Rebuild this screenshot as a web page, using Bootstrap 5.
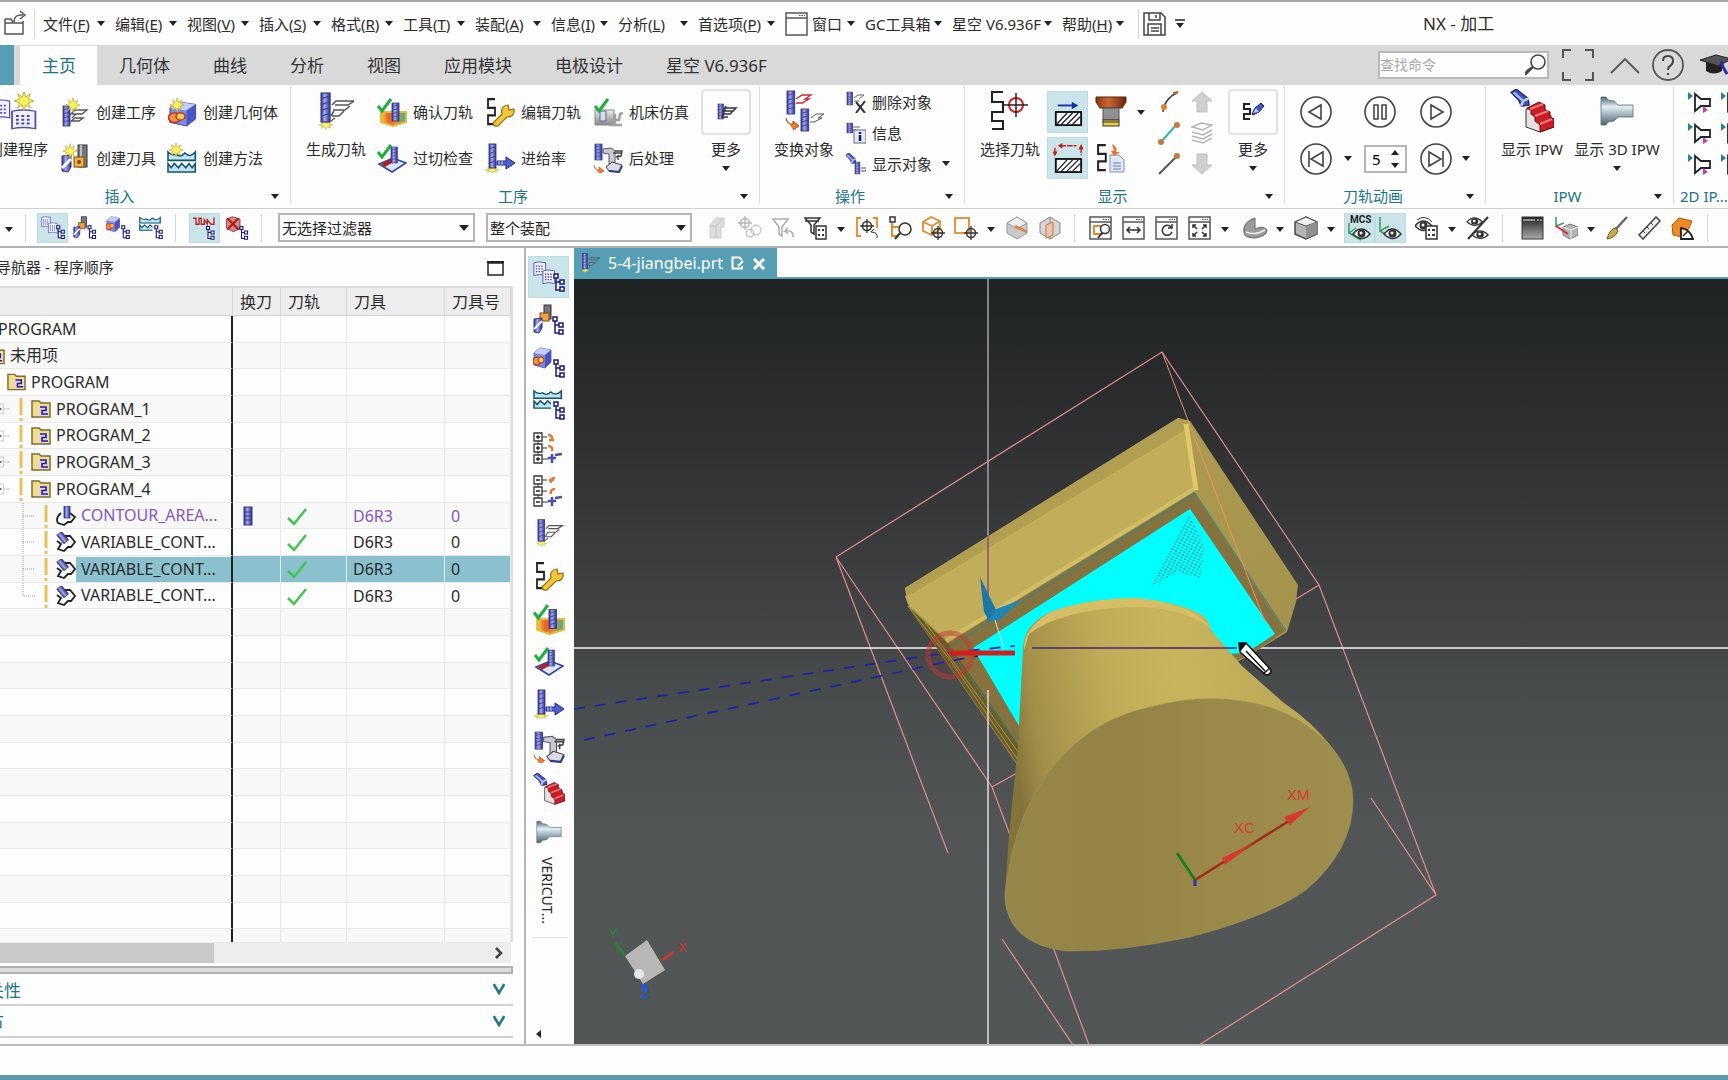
<!DOCTYPE html>
<html lang="zh-CN">
<head>
<meta charset="utf-8">
<meta name="viewport" content="width=device-width, initial-scale=1">
<title>NX - 加工</title>
<link href="https://cdn.jsdelivr.net/npm/bootstrap@5.3.0/dist/css/bootstrap.min.css" rel="stylesheet">
<style>
:root{--teal:#569eb4;--ink:#2b2b2b;--title:#217386;--on:#cbe4e9}
body{font-family:"Noto Sans","Noto Sans CJK SC",sans-serif;font-size:15px;line-height:20px;color:var(--ink);background:#fdfdfd;overflow:hidden}
button{background:none;border:0;padding:0;color:inherit;white-space:nowrap}
svg{flex:none;overflow:visible}
.car{display:inline-block;border:4px solid transparent;border-top:5px solid #222;border-bottom:0;flex:none}
.car-up{border-top:0;border-bottom:5px solid #222}
.vline{width:1px;background:#d5d5d5;flex:none}
/* menu bar */
.menubar{height:45px;border-top:2px solid #a5a5a5;white-space:nowrap}
.menubar .vline{height:30px}
.menubar .mi{padding-right:10px}
.m67{width:67px}.m72{width:72px}.m76{width:76px}.m80{width:80px}.m87{width:87px}.m110{width:110px}
.apptitle{font-size:17px;margin-left:238px}
/* ribbon tabs */
.tabbar{height:40px;background:#d9d9d9}
.filetab{width:14px;background:var(--teal);margin-right:6px}
.rtab{font-size:17px;padding:2px 21px 0 22px;color:#333;text-decoration:none;line-height:38px}
.rtab.on{background:#fdfdfd;color:var(--title);margin-top:1px;padding-top:1px}
.find{width:171px;height:28px;border:2px solid #b9b9b9;background:#fdfdfd;margin:6px 13px 0 auto}
.find input{border:0;outline:0;width:120px;background:none;font-size:14px;padding:0}
.find input::placeholder{color:#aaa}
/* ribbon */
.ribbon{height:124px;border-bottom:1px solid #cfcfcf;padding-top:1px}
.grp{flex:none;border-right:1px solid #dcdcdc;height:118px}
.gbody{display:grid;height:100px;column-gap:12px;align-content:start}
.gtitle{color:var(--title);height:20px;padding-right:11px}
.gtitle span:first-child{flex:1;text-align:center;padding-right:5px}
.big{display:flex;flex-direction:column;align-items:center;padding-top:4px;height:98px}
.big .pic{height:42px;display:flex;align-items:center;margin-bottom:7px}
.big .pic.box{width:50px;height:46px;margin:-1px 0 4px;border:2px solid #e2e2e2;border-radius:4px;justify-content:center}
.big .car{margin-top:7px}
.two{padding-top:3px}
.two>*{height:46px;display:flex;align-items:center;gap:6px}
.three>*{height:31px;display:flex;align-items:center;gap:6px}
.tog{background:var(--on);border:1px solid #bfdbe2;display:flex;align-items:center;justify-content:center}
.g1{width:311px;margin-left:-20px}.g1 .gbody{grid-template-columns:60px 95px 110px;padding-left:8px}
.g1 .gtitle span:first-child{padding-right:12px}
.g2{width:469px}.g2 .gbody{grid-template-columns:58px 96px 96px 96px 50px;padding-left:16px}
.g3{width:205px}.g3 .gbody{grid-template-columns:60px 106px;padding-left:14px}
.g4{width:320px}.g4 .gbody{grid-template-columns:60px 41px 55px 27px 30px 50px;column-gap:7px;padding-left:15px}
.g4 .togs{display:flex;flex-direction:column;gap:4px;padding-top:5px}
.g4 .tog{height:42px}
.g5{width:201px}.g5 .gbody{grid-template-columns:32px 32px 56px 32px 28px;grid-template-rows:47px 47px;column-gap:0;padding:2px 0 0 15px;align-items:center}
.g5 .car{justify-self:center}
.spin{width:43px;height:28px;border:2px solid #b5b5b5;padding:0 6px}
.spin input{width:14px;border:0;padding:0;background:none;outline:0;font-size:15px;appearance:textfield}
.spin input::-webkit-inner-spin-button{display:none}
.g6{width:188px}.g6 .gbody{grid-template-columns:62px 84px;padding-left:15px}
.g7{border:0;width:54px;overflow:hidden}.g7 .gbody{grid-template-columns:24px 24px;column-gap:9px;padding-left:14px}
.g7 .gtitle{padding-left:6px;white-space:nowrap}
/* selection toolbar */
.toolbar{height:39px;border-bottom:2px solid #b2b2b2}
.toolbar .tb{width:33px;height:30px;display:flex;align-items:center;justify-content:center;flex:none}
.toolbar .tb.tog{width:31px}
.toolbar .cr{width:18px;text-align:center;line-height:5px;flex:none}
.toolbar .vline{height:28px;margin:0 9px 0 8px}
.toolbar .left-end{margin:0 7px}
.pick{position:relative;height:29px;flex:none}
.pick select{width:100%;height:29px;border:2px solid #b5b5b5;border-radius:0;padding:0 2px;appearance:none;background:#fdfdfd;color:#222;font-size:15px;line-height:20px}
.pick .car{position:absolute;right:6px;top:12px;border-width:5px;border-top-width:6px;border-bottom:0}
.pick-a{width:197px;margin:0 11px 0 7px}.pick-b{width:206px;margin-right:8px}
/* navigator */
.workarea{height:796px}
.nav-pane{width:526px;border-right:2px solid #b4b4b4;flex:none}
.nav-head{height:38px;font-size:15px;padding:0 20px 0 0}
.nav-head .shift{margin-left:-4px}
.gridbox{width:513px;height:656px;border-right:2px solid #dedede;overflow:hidden}
.gridbox table{table-layout:fixed;width:511px;border-collapse:separate;border-spacing:0;font-size:16px;line-height:20px}
.gridbox th{height:30px;background:#ededed;font-weight:400;border-right:1px solid #d4d4d4;border-top:2px solid #dcdcdc;border-bottom:1px solid #d4d4d4;padding:0 0 0 7px}
.gridbox td{height:27px;border-right:1px solid #e8e8e8;border-bottom:1px solid #e9e9e9;padding:0 0 0 6px;white-space:nowrap;overflow:hidden}
.gridbox tbody tr:nth-child(3n+2) td{height:26px}
.gridbox tbody tr:nth-child(even) td{background:#f8f8f8}
.gridbox td:first-child{border-right:2px solid #222;padding:0}
.gridbox .c-a{width:233px}.gridbox .c-b{width:48px}.gridbox .c-c{width:66px}.gridbox .c-d{width:98px}
.gridbox .cell{display:flex;align-items:center;height:25px}
.gridbox .cell .shift{margin-left:-2px}
.gridbox .lbl{padding-left:5px;flex:1;line-height:25px}
.gridbox .purple td{color:#8557b8}
.gridbox tbody tr.sel td:not(:first-child),.gridbox .sel .lbl{background:#8bc0ce}
.gridbox tr.sel td{border-right-color:#dcebee}
.gridbox tr.sel td:first-child{border-right-color:#222}
.lv1{margin-left:-14px}.lv2{padding-left:7px}
.hbar{height:21px;width:511px;background:#ededed}
.hbar .thumb{width:214px;height:20px;background:#c9c9c9}
.split{height:8px;width:513px;background:#dcdcdc;border:2px solid #b0b0b0;border-left:0;margin-top:3px}
.fold{height:32px;width:513px;border-bottom:2px solid #cfcfcf;color:var(--title);font-size:17px;padding-right:7px}
.fold span{margin-left:-13px;padding-top:4px}
/* vertical icon strip */
.strip{width:48px;flex:none;padding-top:8px}
.strip button{width:41px;height:43px;margin-left:2px;display:flex;align-items:center;justify-content:center}
.strip button:nth-child(3n+1){height:42px}
.strip .vert{writing-mode:vertical-rl;align-self:flex-start;height:76px;line-height:20px;margin:4px 0 4px 11px;font-size:14px}
.strip hr{margin:0 6px;border-color:#999}
.lefty{border:4px solid transparent;border-right:5px solid #222;border-left:0;margin:auto auto 6px 10px;width:5px}
/* graphics window */
.stage{min-width:0}
.doctabs{height:31px;border-bottom:2px solid var(--teal)}
.doctab{background:var(--teal);color:#fff;width:203px;height:31px;font-size:16px;padding:0 7px 2px}
.view{min-height:0;background:linear-gradient(#202323,#2f3132 22%,#404243 43%,#4a4d4e 56%,#515556 72%,#525657)}
.view>svg{display:block;overflow:hidden}
.status{height:36px;border-top:2px solid #bdbdbd;border-bottom:5px solid #5b98ab}
</style>
</head>
<body class="d-flex flex-column vh-100">

<svg width="0" height="0" class="position-absolute" aria-hidden="true">
<defs>
<linearGradient id="bl"><stop offset="0" stop-color="#2b2f86"/><stop offset=".4" stop-color="#a5abee"/><stop offset="1" stop-color="#2c2f90"/></linearGradient>
<linearGradient id="gr" x2="0" y2="1"><stop offset="0" stop-color="#eee"/><stop offset="1" stop-color="#888"/></linearGradient>
<linearGradient id="pipe" x2="0" y2="1"><stop offset="0" stop-color="#4a6573"/><stop offset=".35" stop-color="#e4f0f5"/><stop offset="1" stop-color="#48626e"/></linearGradient>
<linearGradient id="brn"><stop offset="0" stop-color="#8a3510"/><stop offset=".4" stop-color="#c96a35"/><stop offset="1" stop-color="#6e2707"/></linearGradient>
<linearGradient id="rb"><stop offset="0" stop-color="#f2d63c"/><stop offset=".3" stop-color="#e8602b"/><stop offset=".6" stop-color="#f08b2c"/><stop offset="1" stop-color="#27b7a0"/></linearGradient>
<linearGradient id="dk" x2="0" y2="1"><stop offset="0" stop-color="#222"/><stop offset="1" stop-color="#aaa"/></linearGradient>
<polygon id="star" points="0,-9 1.5,-3.5 6,-6.5 3.7,-1.8 9,0 3.7,1.8 6,6.5 1.5,3.5 0,9 -1.5,3.5 -6,6.5 -3.7,1.8 -9,0 -3.7,-1.8 -6,-6.5 -1.5,-3.5" fill="#fdf35a" stroke="#b5a93a" stroke-width=".8"/>
<g id="mill"><rect width="7" height="20" fill="url(#bl)" stroke="#33367e" stroke-width=".8"/><path d="M0 4l7-2M0 8l7-2M0 12l7-2M0 16l7-2" stroke="#3a3e9a" stroke-width=".8"/></g>
<path id="feather2" d="M0 5L5 0h12L12 4H2M2 8L6 4M0 12L5 8h8l-4 3H1" fill="none" stroke="#555" stroke-width="1.300"/>
<path id="tree" d="M1 1h4v4h-4zM3 5v12h4M3 9h4M7 7h4v4h-4zM7 14h4v4h-4z" fill="#fff" stroke="#1a1a78" stroke-width="1.500"/>
<path id="tick" d="M0 6l4 5L13-1" fill="none" stroke="#1fae3d" stroke-width="3"/>
<path id="snake" d="M8 0H1v7h7v6H1v7h7" fill="none" stroke="#222" stroke-width="1.800"/>
<g id="sheet"><path d="M0 1q6-2 13 0v14q-7-2-13 0z" fill="#f1f1fd" stroke="#5353a4"/><path d="M3 4v9M6 4v9M9 4v9" stroke="#4a4aa0" stroke-width="1.600" stroke-dasharray="1.500 1.500"/></g>
<g id="bcube"><path d="M0 5l6-5 11 2v12l-6 6-11-3z" fill="#7d89e6" stroke="#4450a0" stroke-width=".8"/><path d="M0 5l6-5 11 2-6 5z" fill="#c3cefb"/><path d="M11 7l6-5v12l-6 6z" fill="#4a55c4"/><circle cx="3" cy="13" r="4" fill="#f49443" stroke="#c02b10"/><circle cx="7" cy="12" r="3" fill="#f4cd54" stroke="#c02b10"/></g>
<g id="wave"><path d="M0 0v8h26V0q-5 6-10 1-4 5-8 1-4 2-8-2z" fill="#bfe6f3" stroke="#15536e" stroke-width="1.500"/><path d="M0 19v-8l3 4 3-4 4 4 3-4 4 4 3-4 3 4 3-4v8z" fill="#bfe6f3" stroke="#15536e" stroke-width="1.500"/></g>
<g id="torch"><path d="M0 3l4-3 9 8 1 6-6 1-2-5z" fill="#3e55c8" stroke="#1b2158"/><path d="M2 3l7 7" stroke="#aab9f7" stroke-width="2"/><path d="M8 15q0-5 6-7" stroke="#c9cfe8" stroke-width="2" fill="none"/></g>
<g id="eye"><path d="M0 6q8-10 17 0-8 9-17 0z" fill="#fff" stroke="#333" stroke-width="1.500"/><circle cx="8.500" cy="5.500" r="4" fill="#333"/><circle cx="8" cy="5" r="1.500" fill="#fff"/></g>
<g id="win"><path d="M1 1h21v22H1zM1 6h21" fill="none" stroke="#555" stroke-width="1.500"/><path d="M14 3.500h6" stroke="#444" stroke-dasharray="1.500 1"/></g>
<g id="aim"><circle r="4.500" fill="none" stroke="#333" stroke-width="1.500"/><path d="M-7 0h14M0-7v14" stroke="#333" stroke-width="1.300"/></g>

<symbol id="i-prog" viewBox="0 0 38 38"><use href="#sheet" transform="translate(-5 8) scale(1.2)"/><use href="#sheet" transform="translate(13 18) scale(1.8 1.250)"/><use href="#star" transform="translate(25 9) scale(1.100)"/></symbol>
<symbol id="i-op" viewBox="0 0 30 30"><use href="#mill" x="3" y="9"/><use href="#feather2" x="10" y="13"/><use href="#star" transform="translate(13 8) scale(.8)"/></symbol>
<symbol id="i-toolmk" viewBox="0 0 30 30"><rect x="18" y="2" width="9" height="22" fill="#777" stroke="#334"/><path d="M21 2v21" stroke="#bbb" stroke-width="2"/><rect x="14" y="14" width="10" height="10" fill="#f0b045" stroke="#7c4b08"/><circle cx="19" cy="19" r="2" fill="#7c4b08"/><path d="M2 13l9-1v12l-3 5-6-1z" fill="url(#bl)" stroke="#33367e"/><path d="M2 25l9-9" stroke="#fff" stroke-width="3"/><use href="#star" transform="translate(10 8) scale(.8)"/></symbol>
<symbol id="i-geo" viewBox="0 0 30 30"><use href="#bcube" transform="translate(3 5) scale(1.500 1.200)"/><use href="#star" transform="translate(10 8) scale(.8)"/></symbol>
<symbol id="i-method" viewBox="0 0 30 30"><use href="#wave" transform="translate(1 9) scale(1.050 1.050)"/><use href="#star" transform="translate(9 7) scale(.8)"/></symbol>
<symbol id="i-gen" viewBox="0 0 36 38"><use href="#star" transform="translate(8 33) scale(.8 .5)"/><use href="#mill" transform="translate(3 1) scale(1.300 1.450)"/><path d="M14 13L18 9h18l-6 4H17M15 18h12l5-4M13 24l3-5M14 24h7l5-5M13 29l4-3" fill="none" stroke="#555" stroke-width="1.500"/></symbol>
<symbol id="i-verify" viewBox="0 0 30 30"><path d="M4 15h25v10l-13 4-12-4z" fill="url(#rb)" stroke="#e0bd39" stroke-width="2"/><use href="#mill" transform="translate(15 6) scale(1 .9)"/><use href="#tick" x="1" y="3"/></symbol>
<symbol id="i-edit" viewBox="0 0 30 30"><use href="#snake" transform="translate(2 2) scale(1 1.250)"/><path d="M8 26l9-9q-2-8 6-9l1 5 5-1q1 8-7 8l-9 9q-4 1-5-3z" fill="#f2c63c" stroke="#94700f" stroke-width="1.200"/></symbol>
<symbol id="i-gouge" viewBox="0 0 30 30"><path d="M2 21l14-6 13 5-14 9z" fill="#dfe6fb" stroke="#2b47a0" stroke-width="1.500"/><path d="M4 21l10-5 4 2-10 6z" fill="#b51f1f"/><use href="#mill" transform="translate(14 4) scale(.9 .8)"/><use href="#tick" x="1" y="3"/></symbol>
<symbol id="i-feed" viewBox="0 0 30 30"><use href="#star" transform="translate(7 27) scale(.8 .35)"/><use href="#mill" transform="translate(4 1) scale(1 1.200)"/><path d="M12 18h9v-4l9 6-9 6v-4h-9z" fill="#4e5fd0" stroke="#1f2775"/><path d="M14 18v4M17 18v4" stroke="#c6cdf7"/></symbol>
<symbol id="i-sim" viewBox="0 0 30 30"><path d="M2 13h19v15H2z" fill="url(#gr)" stroke="#888"/><path d="M7 14h6v10H7z" fill="#d6dcf5" stroke="#667"/><path d="M18 23h8l1-6 3-1M17 28h12M22 17v10" fill="none" stroke="#a0a0a0" stroke-width="2.500"/><use href="#tick" x="2" y="3"/></symbol>
<symbol id="i-post" viewBox="0 0 30 30"><use href="#mill" transform="translate(2 1) scale(1 .8)"/><path d="M10 6l8-1 4 3v15h-6V11l-6-1z" fill="#c7cbd6" stroke="#555"/><path d="M22 8h7l-1 5-5 1M25 12v5M20 10h9" fill="none" stroke="#444" stroke-width="1.500"/><path d="M13 24l6-5 10 3-3 7-10-1z" fill="#d9dce6" stroke="#444"/><path d="M16 28l10 1 3-6" fill="none" stroke="#333b80" stroke-width="2"/><path d="M1 22q0 5 5 5v-3l5 4-5 3" fill="#ee7f2d" stroke="#a54a0c" stroke-width=".6"/></symbol>
<symbol id="i-more" viewBox="0 0 24 20"><use href="#mill" transform="translate(4 2) scale(.8 .75)"/><path d="M10 6h12l-3 3H8M8 12h8l3-3M10 15h4M12 4L8 16" fill="none" stroke="#333" stroke-width="1.500"/></symbol>
<symbol id="i-xform" viewBox="0 0 40 42"><use href="#mill" transform="translate(3 1) scale(1.100 1.150)"/><path d="M12 9l6-4h9l-6 4h4l-7 4h-6" fill="none" stroke="#c72c2c" stroke-width="1.300"/><use href="#mill" transform="translate(17 19) scale(1.100 1.100)"/><path d="M27 28l5-4h8l-6 4h4l-8 4h-4" fill="none" stroke="#555"/><path d="M2 28q1 7 7 6v-3l6 5-6 4" fill="#ee7f2d" stroke="#a54a0c"/></symbol>
<symbol id="i-del" viewBox="0 0 20 22"><use href="#mill" transform="translate(1 1) scale(.8 .65)"/><path d="M8 7l4-3h6l-5 4M8 10h5" fill="none" stroke="#666"/><path d="M10 11l9 11M19 10l-9 12" stroke="#333" stroke-width="2"/></symbol>
<symbol id="i-inf" viewBox="0 0 20 22"><use href="#mill" transform="translate(1 1) scale(.8 .5)"/><path d="M7 5h7M7 8h4" stroke="#666"/><rect x="8" y="8" width="12" height="13" fill="#e4eafa" stroke="#667"/><path d="M14 10v2M14 13v6" stroke="#14205e" stroke-width="2.500"/></symbol>
<symbol id="i-shw" viewBox="0 0 20 22"><use href="#torch" transform="scale(.7)"/><use href="#mill" transform="translate(9 9) scale(.7 .6)"/><path d="M15 15h7l-3 3h-4" fill="none" stroke="#555"/></symbol>
<symbol id="i-selp" viewBox="0 0 40 40"><path d="M13 1H2v10h11v10H2v9h11v8H2" fill="none" stroke="#222" stroke-width="2"/><circle cx="26" cy="14" r="7" fill="none" stroke="#cc2222" stroke-width="2"/><path d="M14 14h24M26 2v24" stroke="#222" stroke-width="1.500"/></symbol>
<symbol id="i-hatch1" viewBox="0 0 32 34"><path d="M5 10h18" stroke="#1631a8" stroke-width="2"/><path d="M20 6l7 4-7 4z" fill="#1631a8"/><rect x="3" y="17" width="27" height="14" fill="#fff" stroke="#111" stroke-width="2"/><path d="M4 30l11-12M9 30l12-12M15 30l12-12M21 30l8-8" stroke="#223" stroke-width="1.500"/></symbol>
<symbol id="i-hatch2" viewBox="0 0 32 34"><path d="M8 4h17M2 6v8M30 6v8" stroke="#c02222" stroke-width="1.500" stroke-dasharray="6 1"/><path d="M5 4l5-3v6zM-1 10h6l-3 5zM27 8h6l-3-6z" fill="#c02222"/><rect x="3" y="18" width="27" height="14" fill="#fff" stroke="#111" stroke-width="2"/><path d="M4 31l11-12M9 31l12-12M15 31l12-12M21 31l8-8" stroke="#223" stroke-width="1.500"/></symbol>
<symbol id="i-holder" viewBox="0 0 32 34"><path d="M1 2h30v5l-4 6H5L1 7z" fill="url(#brn)" stroke="#5f2409"/><rect x="8" y="13" width="16" height="12" fill="#8f8f94" stroke="#555"/><rect x="8" y="25" width="16" height="6" fill="#e8cf3b" stroke="#333"/><path d="M8 27h16" stroke="#333"/></symbol>
<symbol id="i-lst" viewBox="0 0 32 32"><use href="#snake" transform="translate(2 3) scale(1.100 1.250)"/><path d="M15 13h9l5 5v12H15z" fill="#dfe7fa" stroke="#8790b0"/><path d="M18 21h8M18 24h8M18 27h8" stroke="#6c7bb0"/><path d="M17 2q6 3 4 8h4l-6 4-3-5h3z" fill="#ec6f2b"/></symbol>
<symbol id="i-c1" viewBox="0 0 24 24"><path d="M6 22Q7 9 21 2" fill="none" stroke="#444" stroke-width="1.500"/><circle cx="7" cy="17" r="3" fill="#d98036"/><path d="M21 2l-5 1" stroke="#e06022" stroke-width="2"/></symbol>
<symbol id="i-c2" viewBox="0 0 24 24"><path d="M4 21L20 3" stroke="#33b5b0" stroke-width="2"/><circle cx="4" cy="21" r="3" fill="#c47b41"/><circle cx="20" cy="4" r="3" fill="#c47b41"/></symbol>
<symbol id="i-c3" viewBox="0 0 24 24"><path d="M2 22L20 4" stroke="#555" stroke-width="2"/><circle cx="20" cy="4" r="3" fill="#c47b41"/></symbol>
<symbol id="i-up" viewBox="0 0 22 22"><path d="M11 1l10 9h-5v11H6V10H1z" fill="#cfcfcf" stroke="#c0c0c0"/></symbol>
<symbol id="i-dn" viewBox="0 0 22 22"><path d="M11 21l10-9h-5V1H6v11H1z" fill="#cfcfcf" stroke="#c0c0c0"/></symbol>
<symbol id="i-lay" viewBox="0 0 22 22"><path d="M1 5l9-4 11 2-9 5zM1 10l11 3 9-5M1 14l11 3 9-5M1 18l11 3 9-5" fill="none" stroke="#b5b5b5" stroke-width="1.500"/></symbol>
<symbol id="i-morep" viewBox="0 0 24 24"><path d="M9 4H3v5h6v5H3v5h6" fill="none" stroke="#222" stroke-width="2"/><path d="M11 14l3-6 6-5 3 3-5 6-6 3z" fill="#3e55c8" stroke="#1b2158"/><path d="M12 13l3-5 3 4z" fill="#b9c4f5"/></symbol>
<symbol id="i-ipw" viewBox="0 0 44 44"><use href="#torch" transform="translate(1 0) scale(1.300 1.150)"/><path d="M16 20v18l14 5 14-5v-6l-4-6-5-6z" fill="#e6e0e0" stroke="#333"/><path d="M17 19l12-6 6 3v5l5 2v5l4 2v8l-14 5v-7l-5-4v-4l-4-3v-4z" fill="#c81f27" stroke="#6e0b10"/><path d="M20 20l13-5M25 27l13-5M30 35l12-5" stroke="#f07880" stroke-width="2"/></symbol>
<symbol id="i-ipw3" viewBox="0 0 34 30"><path d="M1 1h5l2 3 6 1 4 4h15v12H18l-4 4-6 1-2 3H1z" fill="url(#pipe)" stroke="#566f7b" stroke-width=".8"/></symbol>
<symbol id="i-2d" viewBox="0 0 24 22"><path d="M7 3v17l6-5h9V8h-9z" fill="none" stroke="#222" stroke-width="1.800"/><path d="M0 1l5 4-5 4z" fill="#2e78a5"/><path d="M15 15l5 4-5 3z" fill="#c03dbd"/></symbol>

<symbol id="i-nprog" viewBox="0 0 32 32"><use href="#sheet" x="1" y="1" transform="scale(.9)"/><use href="#sheet" x="11" y="10" transform="scale(.9)"/><use href="#tree" x="20" y="12"/></symbol>
<symbol id="i-ntool" viewBox="0 0 32 32"><rect x="11" y="1" width="7" height="14" fill="#777" stroke="#334"/><rect x="7" y="9" width="9" height="8" fill="#f0a045" stroke="#7c4b08"/><path d="M1 15l8-1v10l-3 5-5-1z" fill="url(#bl)" stroke="#33367e"/><path d="M1 25l8-8" stroke="#fff" stroke-width="2"/><use href="#tree" x="19" y="12"/></symbol>
<symbol id="i-ngeo" viewBox="0 0 32 32"><use href="#bcube" x="1" y="1"/><use href="#tree" x="20" y="12"/></symbol>
<symbol id="i-nmeth" viewBox="0 0 32 32"><use href="#wave" transform="translate(1 2) scale(1.050 .9)"/><rect x="18" y="11" width="13" height="20" fill="#fdfdfd"/><use href="#tree" x="20" y="12"/></symbol>
<symbol id="i-exp" viewBox="0 0 32 32"><path d="M5 5v22M9 5h5M9 16h5M9 27h6" stroke="#333"/><path d="M1 1h8v8H1zM1 12h8v8H1zM1 23h8v8H1z" fill="#fff" stroke="#333" stroke-width="1.300"/><path d="M3 5h4M3 16h4M3 27h4M5 3v4M5 14v4M5 25v4" stroke="#222" stroke-width="1.300"/><path d="M15 3q5 0 4 5M15 14q5 0 4 5M16 8l5 0" fill="none" stroke="#e07a35" stroke-width="2.500"/><path d="M19 22v9M15 26h8M22 23l7-1" stroke="#4a4fae" stroke-width="2.500"/></symbol>
<symbol id="i-col" viewBox="0 0 32 32"><path d="M5 5v22M9 5h5M9 16h5M9 27h6" stroke="#333"/><path d="M1 1h8v8H1zM1 12h8v8H1zM1 23h8v8H1z" fill="#fff" stroke="#333" stroke-width="1.300"/><path d="M3 5h4M3 16h4M3 27h4" stroke="#222" stroke-width="1.300"/><path d="M22 3q-5 0-4 5M22 14q-5 0-4 5M16 5h5" fill="none" stroke="#e07a35" stroke-width="2.500"/><path d="M19 22v9M15 26h8M22 23l7-1" stroke="#4a4fae" stroke-width="2.500"/></symbol>
<symbol id="i-redp" viewBox="0 0 32 32"><path d="M0 3h4v8h4V3h3v8h4V5l4 6V5l5 6h4V2" fill="none" stroke="#b52222" stroke-width="1.800"/><use href="#tree" x="17" y="13"/></symbol>
<symbol id="i-redx" viewBox="0 0 32 32"><path d="M2 4l8-3 10 3v13l-9 4-9-5z" fill="#d08a8a" stroke="#8a2020"/><path d="M3 3l15 15M18 3L3 18" stroke="#b01515" stroke-width="2.500"/><use href="#tree" x="19" y="13"/></symbol>
<symbol id="i-fold" viewBox="0 0 20 18"><path d="M1 3V1h7l2 2h9v14H1z" fill="#f2dd8d" stroke="#7b6c2c" stroke-width="1.500"/><path d="M8 6h9v10H8z" fill="#dcd3ef"/><path d="M9 7h6v3.500h-4V14h6" fill="none" stroke="#2b1c8a" stroke-width="1.600"/></symbol>
<symbol id="i-surf" viewBox="0 0 20 20"><path d="M5 7q-6 5-3 10l6 2 4-3h3l4-5-5-4" fill="none" stroke="#222" stroke-width="1.800"/><rect x="8" y="0" width="6" height="12" fill="url(#bl)" stroke="#33367e" stroke-width=".8"/></symbol>
<symbol id="i-surfv" viewBox="0 0 20 20"><path d="M8 4h6l5 6-4 5h-3l-4 4-6-2 3-5-4-3" fill="none" stroke="#222" stroke-width="1.800"/><rect x="4" y="0" width="6" height="11" transform="rotate(-40 7 6)" fill="url(#bl)" stroke="#33367e" stroke-width=".8"/></symbol>
<symbol id="i-chk" viewBox="0 0 20 18"><path d="M1 10l6 6L19 1" fill="none" stroke="#3fc64e" stroke-width="2.500"/></symbol>
<symbol id="i-bang" viewBox="0 0 4 24"><path d="M2 1v17M2 21v3" stroke="#e9c15a" stroke-width="3"/></symbol>
<symbol id="i-plus" viewBox="0 0 16 16"><path d="M-6 3h8v10h-8" fill="none" stroke="#ccc"/><path d="M-2 8h2" stroke="#333" stroke-width="1.500"/><path d="M3 8h6" stroke="#999" stroke-dasharray="1 1"/></symbol>

<symbol id="t-a" viewBox="0 0 24 24"><path d="M5 9l6-7h8v9h-3v11H5z" fill="#ddd" stroke="#ccc"/><path d="M5 10h6l6-7M11 10v12" fill="none" stroke="#c4c4c4"/></symbol>
<symbol id="t-b" viewBox="0 0 24 24"><g opacity=".35"><use href="#aim" x="7" y="7"/><circle cx="12" cy="17" r="4" fill="none" stroke="#333"/><circle cx="18" cy="14" r="5" fill="none" stroke="#333"/></g></symbol>
<symbol id="t-c" viewBox="0 0 24 24"><g opacity=".4" fill="none" stroke="#333" stroke-width="1.500"><path d="M2 3h15l-6 8v9l-3-2v-7zM22 21q1-7-8-6l3-3M14 15l3 3"/></g></symbol>
<symbol id="t-d" viewBox="0 0 24 24"><path d="M1 2h15l-6 7v9l-3-2V9zM1 5h14" fill="none" stroke="#333" stroke-width="1.500"/><path d="M12 10h10v13H12z" fill="#fff" stroke="#333" stroke-width="1.500"/><path d="M14 14h2M18 14h2M14 19h2M18 19h2" stroke="#333" stroke-width="2"/></symbol>
<symbol id="t-e" viewBox="0 0 24 24"><path d="M6 2H2v18h4M18 2h4v10" fill="none" stroke="#e58b2b" stroke-width="1.800"/><use href="#aim" x="12" y="10"/><path d="M22 22q1-6-6-6l3-3" fill="none" stroke="#333"/></symbol>
<symbol id="t-f" viewBox="0 0 24 24"><path d="M4 7v13h7M4 11h8" fill="none" stroke="#e58b2b" stroke-width="2"/><path d="M2 1h5v5H2z" fill="#fff" stroke="#333" stroke-width="1.500"/><circle cx="17" cy="13" r="6" fill="none" stroke="#333" stroke-width="1.500"/><path d="M12 17l-5 6" stroke="#333" stroke-width="2"/></symbol>
<symbol id="t-g" viewBox="0 0 24 24"><path d="M2 6l8-5 9 4v8l-8 6-9-4zM2 6l9 4 8-5M11 10v9" fill="none" stroke="#e08a32" stroke-width="1.800"/><use href="#aim" x="17" y="17"/></symbol>
<symbol id="t-h" viewBox="0 0 24 24"><rect x="1" y="2" width="14" height="15" fill="none" stroke="#e08a32" stroke-width="1.800"/><use href="#aim" x="17" y="17"/></symbol>
<symbol id="t-i" viewBox="0 0 24 24"><path d="M2 7l10-6 10 6v10l-10 6-10-6z" fill="#c9c9c9" stroke="#999"/><path d="M2 7l10 6 10-6-10-6z" fill="#eee" stroke="#999"/><path d="M10 10l12 6" stroke="#e08040" stroke-width="2.500"/></symbol>
<symbol id="t-j" viewBox="0 0 24 24"><path d="M2 7l10-6 10 6v10l-10 6-10-6z" fill="#d5d5d5" stroke="#888"/><path d="M12 1v22" stroke="#888"/><path d="M8 9l7-3v13l-7 3z" fill="#e9c6ad" stroke="#d0763e"/></symbol>
<symbol id="t-k" viewBox="0 0 24 24"><use href="#win"/><path d="M5 10h8v8H5z" fill="none" stroke="#e08a32" stroke-width="2"/><circle cx="16" cy="13" r="4.500" fill="#fff" stroke="#333" stroke-width="1.500"/><path d="M13 17l-4 5" stroke="#333" stroke-width="2"/></symbol>
<symbol id="t-l" viewBox="0 0 24 24"><use href="#win"/><path d="M5 14h13M8 11l-3 3 3 3M15 11l3 3-3 3" fill="none" stroke="#333" stroke-width="1.500"/></symbol>
<symbol id="t-m" viewBox="0 0 24 24"><use href="#win"/><path d="M16 11a5 5 0 1 0 1 5M17 8v4h-4" fill="none" stroke="#333" stroke-width="1.500"/></symbol>
<symbol id="t-n" viewBox="0 0 24 24"><use href="#win"/><path d="M5 12V9h3M15 9h3v3M18 17v3h-3M8 20H5v-3M5 9l4 4M18 9l-4 4M18 20l-4-4M5 20l4-4" fill="none" stroke="#333" stroke-width="1.500"/></symbol>
<symbol id="t-o" viewBox="0 0 26 24"><path d="M2 17q-2-11 11-15v11q8-4 12 1 0 6-12 8-10 0-11-5z" fill="#9b9b9b" stroke="#666"/><path d="M4 16q9 4 19-2" fill="none" stroke="#eee" stroke-width="1.500"/></symbol>
<symbol id="t-p" viewBox="0 0 24 24"><path d="M1 6l11-5 11 5v12l-11 5-11-5z" fill="#b4b4b4" stroke="#333" stroke-width="1.300"/><path d="M1 6l11 4 11-4-11-5z" fill="#eee" stroke="#555"/><path d="M12 10v13l11-5V6z" fill="#909090"/></symbol>
<symbol id="t-q" viewBox="0 0 28 28"><text x="4" y="9" font-size="10" font-weight="700" font-family="Roboto" fill="#222">MCS</text><path d="M3 9v10l12 7M3 19l7-5" fill="none" stroke="#32a060" stroke-width="1.500"/><use href="#eye" x="7" y="14"/></symbol>
<symbol id="t-r" viewBox="0 0 28 28"><path d="M3 3v14l9-5M3 17l12 7" fill="none" stroke="#32a060" stroke-width="1.500"/><use href="#eye" x="7" y="14"/></symbol>
<symbol id="t-s" viewBox="0 0 24 24"><use href="#eye" x="0" y="4"/><path d="M2 4q8-6 15 2" stroke="#333" fill="none"/><path d="M11 10h11v13H11z" fill="#fff" stroke="#333" stroke-width="1.500"/><path d="M13 14h2M17 14h3M13 19h2M17 19h3" stroke="#333" stroke-width="2"/></symbol>
<symbol id="t-t" viewBox="0 0 24 24"><use href="#eye" transform="translate(1 1) scale(.9 .8)"/><use href="#eye" transform="translate(6 14) scale(.95 .8)"/><path d="M22 1L2 23" stroke="#333" stroke-width="2"/></symbol>
<symbol id="t-u" viewBox="0 0 24 24"><rect x="1" y="1" width="21" height="22" fill="url(#dk)" stroke="#333"/><path d="M2 4h19" stroke="#eee" stroke-dasharray="12 2 2 1"/></symbol>
<symbol id="t-v" viewBox="0 0 24 24"><path d="M9 11l7-3 8 3v8l-8 4-7-4z" fill="#b5b5b5" stroke="#777"/><path d="M9 11l8 3 7-3M17 14v9" fill="none" stroke="#eee"/><path d="M2 1v9l8-3" fill="none" stroke="#32a060" stroke-width="1.500"/><path d="M2 10l12 8" stroke="#d22" stroke-width="1.800"/></symbol>
<symbol id="t-w" viewBox="0 0 24 24"><path d="M22 1L10 14" stroke="#666" stroke-width="2.500"/><path d="M11 12q-6 0-9 11 8-1 11-8z" fill="#c5ac4a" stroke="#6b5a1c"/></symbol>
<symbol id="t-x" viewBox="0 0 24 24"><path d="M1 19L18 1l4 4L5 23z" fill="#eee" stroke="#444" stroke-width="1.500"/><path d="M5 15l2 2M9 11l2 2M13 7l2 2" stroke="#444"/></symbol>
<symbol id="t-y" viewBox="0 0 24 24"><path d="M1 9l7-7 13 3-3 7-7 9-9-2z" fill="#ee8b28" stroke="#a85a0d"/><path d="M10 23V12q9 1 12 11z" fill="#fff" stroke="#222" stroke-width="1.800"/><path d="M12 20l5-5" stroke="#222" stroke-width="1.500"/></symbol>
</defs>
</svg>

<header class="menubar d-flex align-items-center">
  <button aria-label="切换窗口"><svg width="30" height="30" viewBox="0 0 30 30"><path d="M5 10v15h18V12M5 14h18M5 10h6l2 3M14 13q0-8 9-7M20 2l5 4-5 4" fill="none" stroke="#555" stroke-width="1.500"/></svg></button>
  <div class="vline mx-1"></div>
  <nav class="d-flex ps-1">
    <button class="mi m72 d-flex align-items-center">文件(<u>F</u>)<i class="car ms-auto"></i></button>
    <button class="mi m72 d-flex align-items-center">编辑(<u>E</u>)<i class="car ms-auto"></i></button>
    <button class="mi m72 d-flex align-items-center">视图(<u>V</u>)<i class="car ms-auto"></i></button>
    <button class="mi m72 d-flex align-items-center">插入(<u>S</u>)<i class="car ms-auto"></i></button>
    <button class="mi m72 d-flex align-items-center">格式(<u>R</u>)<i class="car ms-auto"></i></button>
    <button class="mi m72 d-flex align-items-center">工具(<u>T</u>)<i class="car ms-auto"></i></button>
    <button class="mi m76 d-flex align-items-center">装配(<u>A</u>)<i class="car ms-auto"></i></button>
    <button class="mi m67 d-flex align-items-center">信息(<u>I</u>)<i class="car ms-auto"></i></button>
    <button class="mi m80 d-flex align-items-center">分析(<u>L</u>)<i class="car ms-auto"></i></button>
    <button class="mi m87 d-flex align-items-center">首选项(<u>P</u>)<i class="car ms-auto"></i></button>
    <button class="mi m80 d-flex align-items-center"><svg class="me-1" width="23" height="24" viewBox="0 0 23 24"><use href="#win"/></svg>窗口<i class="car ms-auto"></i></button>
    <button class="mi m87 d-flex align-items-center">GC工具箱<i class="car ms-auto"></i></button>
    <button class="mi m110 d-flex align-items-center">星空 V6.936F<i class="car ms-auto"></i></button>
    <button class="mi m72 d-flex align-items-center">帮助(<u>H</u>)<i class="car ms-auto"></i></button>
  </nav>
  <div class="vline mx-1"></div>
  <button aria-label="保存"><svg width="24" height="24" viewBox="0 0 24 24"><path d="M1 1h17l4 4v18H1zM6 1v7h11V1M13 3v3M5 23V12h13v11M8 16h8M8 19h8" fill="none" stroke="#444" stroke-width="1.500"/></svg></button>
  <button class="ms-2 d-flex flex-column align-items-center" aria-label="自定义"><svg width="10" height="9" viewBox="0 0 10 9"><path d="M0 1h10" stroke="#222" stroke-width="1.500"/><path d="M1 4h8l-4 5z" fill="#222"/></svg></button>
  <div class="apptitle">NX - 加工</div>
</header>

<div class="tabbar d-flex">
  <div class="filetab"></div>
  <a class="rtab on" href="#">主页</a><a class="rtab" href="#">几何体</a><a class="rtab" href="#">曲线</a><a class="rtab" href="#">分析</a><a class="rtab" href="#">视图</a><a class="rtab" href="#">应用模块</a><a class="rtab" href="#">电极设计</a><a class="rtab" href="#">星空 V6.936F</a>
  <div class="find d-flex align-items-center justify-content-between"><input type="text" placeholder="查找命令" aria-label="查找命令"><svg width="24" height="24" viewBox="0 0 24 24"><circle cx="15" cy="9" r="7" fill="none" stroke="#444" stroke-width="1.600"/><path d="M10 14l-7 7q-1-3 7-7" fill="none" stroke="#444" stroke-width="2"/></svg></div>
  <div class="d-flex align-items-center">
    <button class="me-3" aria-label="全屏"><svg width="32" height="32" viewBox="0 0 32 32"><path d="M1 9V1h8M23 1h8v8M31 23v8h-8M9 31H1v-8" fill="none" stroke="#555" stroke-width="2"/></svg></button>
    <button class="me-2" aria-label="收起功能区"><svg width="30" height="20" viewBox="0 0 30 20"><path d="M1 17L15 3l14 14" fill="none" stroke="#555" stroke-width="1.800"/></svg></button>
    <button class="ms-1 me-3" aria-label="帮助"><svg width="32" height="32" viewBox="0 0 32 32"><circle cx="16" cy="16" r="15" fill="none" stroke="#555" stroke-width="1.800"/><path d="M11 12q0-5 5-5t5 5q0 3-3 5-2 1-2 4M16 24v2" fill="none" stroke="#444" stroke-width="2"/></svg></button>
    <button aria-label="教程"><svg width="28" height="26" viewBox="0 0 28 26"><path d="M6 9v10q8 5 16 0v-8z" fill="#222"/><path d="M0 8l16-5 16 4-14 7z" fill="#555" stroke="#222"/><path d="M21 9l2 6 4 7" stroke="#2b2bb0" stroke-width="3" fill="none"/></svg></button>
  </div>
</div>

<div class="ribbon d-flex overflow-hidden">
  <section class="grp g1">
    <div class="gbody">
      <button class="big"><span class="pic"><svg width="38" height="38"><use href="#i-prog"/></svg></span>创建程序</button>
      <div class="two"><button><svg width="30" height="30"><use href="#i-op"/></svg>创建工序</button><button><svg width="30" height="30"><use href="#i-toolmk"/></svg>创建刀具</button></div>
      <div class="two"><button><svg width="30" height="30"><use href="#i-geo"/></svg>创建几何体</button><button><svg width="30" height="30"><use href="#i-method"/></svg>创建方法</button></div>
    </div>
    <div class="gtitle d-flex align-items-center"><span>插入</span><i class="car"></i></div>
  </section>
  <section class="grp g2">
    <div class="gbody">
      <button class="big"><span class="pic"><svg width="36" height="38"><use href="#i-gen"/></svg></span>生成刀轨</button>
      <div class="two"><button><svg width="30" height="30"><use href="#i-verify"/></svg>确认刀轨</button><button><svg width="30" height="30"><use href="#i-gouge"/></svg>过切检查</button></div>
      <div class="two"><button><svg width="30" height="30"><use href="#i-edit"/></svg>编辑刀轨</button><button><svg width="30" height="30"><use href="#i-feed"/></svg>进给率</button></div>
      <div class="two"><button><svg width="30" height="30"><use href="#i-sim"/></svg>机床仿真</button><button><svg width="30" height="30"><use href="#i-post"/></svg>后处理</button></div>
      <button class="big"><span class="pic box"><svg width="24" height="20"><use href="#i-more"/></svg></span>更多<i class="car"></i></button>
    </div>
    <div class="gtitle d-flex align-items-center"><span>工序</span><i class="car"></i></div>
  </section>
  <section class="grp g3">
    <div class="gbody">
      <button class="big"><span class="pic"><svg width="40" height="42"><use href="#i-xform"/></svg></span>变换对象</button>
      <div class="three"><button><svg width="20" height="22"><use href="#i-del"/></svg>删除对象</button><button><svg width="20" height="22"><use href="#i-inf"/></svg>信息</button><button><svg width="20" height="22"><use href="#i-shw"/></svg>显示对象<i class="car ms-1"></i></button></div>
    </div>
    <div class="gtitle d-flex align-items-center"><span>操作</span><i class="car"></i></div>
  </section>
  <section class="grp g4">
    <div class="gbody">
      <button class="big"><span class="pic"><svg width="40" height="40"><use href="#i-selp"/></svg></span>选择刀轨</button>
      <div class="togs"><button class="tog" aria-label="显示切削移动"><svg width="30" height="32"><use href="#i-hatch1"/></svg></button><button class="tog" aria-label="显示非切削移动"><svg width="30" height="32"><use href="#i-hatch2"/></svg></button></div>
      <div class="two"><button aria-label="刀具显示"><svg width="32" height="34"><use href="#i-holder"/></svg><i class="car ms-1"></i></button><button aria-label="列表"><svg width="32" height="32"><use href="#i-lst"/></svg></button></div>
      <div class="three"><button aria-label="曲线"><svg width="24" height="24"><use href="#i-c1"/></svg></button><button aria-label="线段"><svg width="24" height="24"><use href="#i-c2"/></svg></button><button aria-label="端点"><svg width="24" height="24"><use href="#i-c3"/></svg></button></div>
      <div class="three"><button aria-label="上一层"><svg width="22" height="22"><use href="#i-up"/></svg></button><button aria-label="层"><svg width="22" height="22"><use href="#i-lay"/></svg></button><button aria-label="下一层"><svg width="22" height="22"><use href="#i-dn"/></svg></button></div>
      <button class="big"><span class="pic box"><svg width="24" height="24"><use href="#i-morep"/></svg></span>更多<i class="car"></i></button>
    </div>
    <div class="gtitle d-flex align-items-center"><span>显示</span><i class="car"></i></div>
  </section>
  <section class="grp g5">
    <div class="gbody">
      <button aria-label="反向播放"><svg width="32" height="32" viewBox="0 0 32 32" fill="none" stroke="#444" stroke-width="1.600"><circle cx="16" cy="16" r="15"/><path d="M21 9v14L9 16z"/></svg></button>
      <span></span>
      <button class="text-start" aria-label="暂停"><svg width="32" height="32" viewBox="0 0 32 32" fill="none" stroke="#444" stroke-width="1.600"><circle cx="16" cy="16" r="15"/><path d="M10 9h4v14h-4zM18 9h4v14h-4z"/></svg></button>
      <button aria-label="播放"><svg width="32" height="32" viewBox="0 0 32 32" fill="none" stroke="#444" stroke-width="1.600"><circle cx="16" cy="16" r="15"/><path d="M11 9v14l12-7z"/></svg></button>
      <span></span>
      <button aria-label="后退一步"><svg width="32" height="32" viewBox="0 0 32 32" fill="none" stroke="#444" stroke-width="1.600"><circle cx="16" cy="16" r="15"/><path d="M23 9v14L11 16zM9 8v16"/></svg></button>
      <i class="car"></i>
      <div class="spin d-flex align-items-center justify-content-between"><input type="number" value="5" aria-label="动画速度"><span class="d-flex flex-column gap-2"><i class="car car-up"></i><i class="car"></i></span></div>
      <button aria-label="前进一步"><svg width="32" height="32" viewBox="0 0 32 32" fill="none" stroke="#444" stroke-width="1.600"><circle cx="16" cy="16" r="15"/><path d="M9 9v14l12-7zM23 8v16"/></svg></button>
      <i class="car"></i>
    </div>
    <div class="gtitle d-flex align-items-center"><span>刀轨动画</span><i class="car"></i></div>
  </section>
  <section class="grp g6">
    <div class="gbody">
      <button class="big"><span class="pic"><svg width="44" height="44"><use href="#i-ipw"/></svg></span>显示 IPW</button>
      <button class="big"><span class="pic"><svg width="34" height="30"><use href="#i-ipw3"/></svg></span>显示 3D IPW<i class="car"></i></button>
    </div>
    <div class="gtitle d-flex align-items-center"><span>IPW</span><i class="car"></i></div>
  </section>
  <section class="grp g7">
    <div class="gbody">
      <div class="three"><button aria-label="2D 1"><svg width="24" height="22"><use href="#i-2d"/></svg></button><button aria-label="2D 2"><svg width="24" height="22"><use href="#i-2d"/></svg></button><button aria-label="2D 3"><svg width="24" height="22"><use href="#i-2d"/></svg></button></div>
      <div class="three"><button aria-label="2D 4"><svg width="24" height="22"><use href="#i-2d"/></svg></button><button aria-label="2D 5"><svg width="24" height="22"><use href="#i-2d"/></svg></button><button aria-label="2D 6"><svg width="24" height="22"><use href="#i-2d"/></svg></button></div>
    </div>
    <div class="gtitle">2D IP...</div>
  </section>
</div>

<div class="toolbar d-flex align-items-center overflow-hidden">
  <span class="cr"><i class="car"></i></span><div class="vline left-end"></div>
  <button class="tb tog ms-1" aria-label="程序顺序视图"><svg width="24" height="24"><use href="#i-nprog"/></svg></button>
  <button class="tb" aria-label="机床视图"><svg width="24" height="24"><use href="#i-ntool"/></svg></button>
  <button class="tb" aria-label="几何视图"><svg width="24" height="24"><use href="#i-ngeo"/></svg></button>
  <button class="tb" aria-label="加工方法视图"><svg width="24" height="24"><use href="#i-nmeth"/></svg></button>
  <div class="vline"></div>
  <button class="tb tog ms-1" aria-label="刀轨"><svg width="24" height="24"><use href="#i-redp"/></svg></button>
  <button class="tb" aria-label="过滤"><svg width="24" height="24"><use href="#i-redx"/></svg></button>
  <div class="vline"></div>
  <div class="pick pick-a"><select aria-label="类型过滤器"><option>无选择过滤器</option></select><i class="car"></i></div>
  <div class="pick pick-b"><select aria-label="选择范围"><option>整个装配</option></select><i class="car"></i></div>
  <button class="tb" aria-label="工具"><svg width="24" height="24"><use href="#t-a"/></svg></button>
  <button class="tb" aria-label="关联"><svg width="24" height="24"><use href="#t-b"/></svg></button>
  <button class="tb" aria-label="重置过滤器"><svg width="24" height="24"><use href="#t-c"/></svg></button>
  <button class="tb" aria-label="过滤器"><svg width="24" height="24"><use href="#t-d"/></svg></button><span class="cr"><i class="car"></i></span>
  <button class="tb" aria-label="捕捉"><svg width="24" height="24"><use href="#t-e"/></svg></button>
  <button class="tb" aria-label="查找"><svg width="24" height="24"><use href="#t-f"/></svg></button>
  <button class="tb" aria-label="体"><svg width="24" height="24"><use href="#t-g"/></svg></button>
  <button class="tb" aria-label="矩形"><svg width="24" height="24"><use href="#t-h"/></svg></button><span class="cr"><i class="car"></i></span>
  <button class="tb" aria-label="截面"><svg width="24" height="24"><use href="#t-i"/></svg></button>
  <button class="tb" aria-label="编辑截面"><svg width="24" height="24"><use href="#t-j"/></svg></button>
  <div class="vline"></div>
  <button class="tb" aria-label="缩放"><svg width="24" height="24"><use href="#t-k"/></svg></button>
  <button class="tb" aria-label="平移"><svg width="24" height="24"><use href="#t-l"/></svg></button>
  <button class="tb" aria-label="旋转"><svg width="24" height="24"><use href="#t-m"/></svg></button>
  <button class="tb" aria-label="适合窗口"><svg width="24" height="24"><use href="#t-n"/></svg></button><span class="cr"><i class="car"></i></span>
  <button class="tb ms-1" aria-label="定向"><svg width="26" height="24"><use href="#t-o"/></svg></button><span class="cr"><i class="car"></i></span>
  <button class="tb" aria-label="着色"><svg width="24" height="26"><use href="#t-p"/></svg></button><span class="cr"><i class="car"></i></span>
  <button class="tb tog ms-1" aria-label="MCS"><svg width="28" height="28"><use href="#t-q"/></svg></button>
  <button class="tb tog me-1" aria-label="WCS"><svg width="28" height="28"><use href="#t-r"/></svg></button>
  <button class="tb" aria-label="显示"><svg width="24" height="24"><use href="#t-s"/></svg></button><span class="cr"><i class="car"></i></span>
  <button class="tb" aria-label="隐藏"><svg width="24" height="24"><use href="#t-t"/></svg></button>
  <div class="vline"></div>
  <button class="tb ms-1" aria-label="背景"><svg width="24" height="24"><use href="#t-u"/></svg></button>
  <button class="tb" aria-label="坐标"><svg width="24" height="24"><use href="#t-v"/></svg></button><span class="cr"><i class="car"></i></span>
  <button class="tb" aria-label="刷"><svg width="24" height="24"><use href="#t-w"/></svg></button>
  <button class="tb" aria-label="测量"><svg width="24" height="24"><use href="#t-x"/></svg></button>
  <button class="tb" aria-label="分析"><svg width="24" height="24"><use href="#t-y"/></svg></button>
  <div class="vline"></div>
</div>

<main class="workarea d-flex flex-grow-1">
  <aside class="nav-pane d-flex flex-column overflow-hidden">
    <div class="nav-head d-flex align-items-center justify-content-between"><span class="shift">导航器 - 程序顺序</span><button aria-label="最大化"><svg width="17" height="15" viewBox="0 0 17 15"><path d="M1 2h15v12H1z" fill="none" stroke="#222" stroke-width="1.500"/><path d="M0 1h17" stroke="#222" stroke-width="2"/></svg></button></div>
    <div class="gridbox">
      <table>
        <thead><tr><th class="c-a"></th><th class="c-b">换刀</th><th class="c-c">刀轨</th><th class="c-d">刀具</th><th>刀具号</th></tr></thead>
        <tbody>
        <tr><td><div class="cell"><span class="shift">PROGRAM</span></div></td><td></td><td></td><td></td><td></td></tr>
        <tr><td><div class="cell lv1"><svg width="19" height="18"><use href="#i-fold"/></svg><span class="lbl">未用项</span></div></td><td></td><td></td><td></td><td></td></tr>
        <tr><td><div class="cell lv2"><svg width="19" height="18"><use href="#i-fold"/></svg><span class="lbl">PROGRAM</span></div></td><td></td><td></td><td></td><td></td></tr>
        <tr><td><div class="cell"><svg width="19" height="16"><use href="#i-plus"/></svg><svg class="me-2" width="4" height="24"><use href="#i-bang"/></svg><svg width="20" height="18"><use href="#i-fold"/></svg><span class="lbl">PROGRAM_1</span></div></td><td></td><td></td><td></td><td></td></tr>
        <tr><td><div class="cell"><svg width="19" height="16"><use href="#i-plus"/></svg><svg class="me-2" width="4" height="24"><use href="#i-bang"/></svg><svg width="20" height="18"><use href="#i-fold"/></svg><span class="lbl">PROGRAM_2</span></div></td><td></td><td></td><td></td><td></td></tr>
        <tr><td><div class="cell"><svg width="19" height="16"><use href="#i-plus"/></svg><svg class="me-2" width="4" height="24"><use href="#i-bang"/></svg><svg width="20" height="18"><use href="#i-fold"/></svg><span class="lbl">PROGRAM_3</span></div></td><td></td><td></td><td></td><td></td></tr>
        <tr><td><div class="cell"><svg width="19" height="16"><use href="#i-plus"/></svg><svg class="me-2" width="4" height="24"><use href="#i-bang"/></svg><svg width="20" height="18"><use href="#i-fold"/></svg><span class="lbl">PROGRAM_4</span></div></td><td></td><td></td><td></td><td></td></tr>
        <tr class="purple"><td><div class="cell"><svg width="44" height="26" viewBox="0 0 44 26"><path d="M23 0v26M23 13h12" fill="none" stroke="#999" stroke-dasharray="1 1"/></svg><svg class="me-2" width="4" height="24"><use href="#i-bang"/></svg><svg width="20" height="20"><use href="#i-surf"/></svg><span class="lbl">CONTOUR_AREA...</span></div></td><td><svg class="ms-1" width="10" height="20" viewBox="0 0 10 20"><rect x="1" y="1" width="8" height="18" fill="url(#bl)" stroke="#33367e"/><path d="M1 6h8M1 10h8M1 14h8" stroke="#33367e"/></svg></td><td><svg width="20" height="18"><use href="#i-chk"/></svg></td><td>D6R3</td><td>0</td></tr>
        <tr><td><div class="cell"><svg width="44" height="26" viewBox="0 0 44 26"><path d="M23 0v26M23 13h12" fill="none" stroke="#999" stroke-dasharray="1 1"/></svg><svg class="me-2" width="4" height="24"><use href="#i-bang"/></svg><svg width="20" height="20"><use href="#i-surfv"/></svg><span class="lbl">VARIABLE_CONT...</span></div></td><td></td><td><svg width="20" height="18"><use href="#i-chk"/></svg></td><td>D6R3</td><td>0</td></tr>
        <tr class="sel"><td><div class="cell"><svg width="44" height="26" viewBox="0 0 44 26"><path d="M23 0v26M23 13h12" fill="none" stroke="#999" stroke-dasharray="1 1"/></svg><svg class="me-2" width="4" height="24"><use href="#i-bang"/></svg><svg width="20" height="20"><use href="#i-surfv"/></svg><span class="lbl">VARIABLE_CONT...</span></div></td><td></td><td><svg width="20" height="18"><use href="#i-chk"/></svg></td><td>D6R3</td><td>0</td></tr>
        <tr><td><div class="cell"><svg width="44" height="26" viewBox="0 0 44 26"><path d="M23 0v13h12" fill="none" stroke="#999" stroke-dasharray="1 1"/></svg><svg class="me-2" width="4" height="24"><use href="#i-bang"/></svg><svg width="20" height="20"><use href="#i-surfv"/></svg><span class="lbl">VARIABLE_CONT...</span></div></td><td></td><td><svg width="20" height="18"><use href="#i-chk"/></svg></td><td>D6R3</td><td>0</td></tr>
        <tr><td></td><td></td><td></td><td></td><td></td></tr><tr><td></td><td></td><td></td><td></td><td></td></tr>
        <tr><td></td><td></td><td></td><td></td><td></td></tr><tr><td></td><td></td><td></td><td></td><td></td></tr>
        <tr><td></td><td></td><td></td><td></td><td></td></tr><tr><td></td><td></td><td></td><td></td><td></td></tr>
        <tr><td></td><td></td><td></td><td></td><td></td></tr><tr><td></td><td></td><td></td><td></td><td></td></tr>
        <tr><td></td><td></td><td></td><td></td><td></td></tr><tr><td></td><td></td><td></td><td></td><td></td></tr>
        <tr><td></td><td></td><td></td><td></td><td></td></tr><tr><td></td><td></td><td></td><td></td><td></td></tr>
        <tr><td></td><td></td><td></td><td></td><td></td></tr>
        </tbody>
      </table>
    </div>
    <div class="hbar d-flex align-items-center justify-content-between flex-shrink-0"><div class="thumb"></div><svg class="me-2" width="8" height="12" viewBox="0 0 8 12"><path d="M1 1l5 5-5 5" fill="none" stroke="#444" stroke-width="2.500"/></svg></div>
    <div class="split flex-shrink-0"></div>
    <div class="fold d-flex align-items-center justify-content-between flex-shrink-0"><span>关性</span><svg width="14" height="12" viewBox="0 0 16 13"><path d="M2 1l6 10 6-10" fill="none" stroke="#217386" stroke-width="3"/></svg></div>
    <div class="fold d-flex align-items-center justify-content-between flex-shrink-0"><span>节</span><svg width="14" height="12" viewBox="0 0 16 13"><path d="M2 1l6 10 6-10" fill="none" stroke="#217386" stroke-width="3"/></svg></div>
  </aside>

  <div class="strip d-flex flex-column">
    <button class="tog" aria-label="程序顺序"><svg width="32" height="32"><use href="#i-nprog"/></svg></button>
    <button aria-label="机床"><svg width="32" height="32"><use href="#i-ntool"/></svg></button>
    <button aria-label="几何"><svg width="32" height="32"><use href="#i-ngeo"/></svg></button>
    <button aria-label="方法"><svg width="32" height="32"><use href="#i-nmeth"/></svg></button>
    <button aria-label="展开"><svg width="32" height="32"><use href="#i-exp"/></svg></button>
    <button aria-label="折叠"><svg width="32" height="32"><use href="#i-col"/></svg></button>
    <button aria-label="生成"><svg width="30" height="28"><use href="#i-gen"/></svg></button>
    <button aria-label="编辑"><svg width="30" height="30"><use href="#i-edit"/></svg></button>
    <button aria-label="确认"><svg width="32" height="32"><use href="#i-verify"/></svg></button>
    <button aria-label="过切"><svg width="30" height="30"><use href="#i-gouge"/></svg></button>
    <button aria-label="进给率"><svg width="30" height="30"><use href="#i-feed"/></svg></button>
    <button aria-label="后处理"><svg width="32" height="32"><use href="#i-post"/></svg></button>
    <button aria-label="显示 IPW"><svg width="32" height="32"><use href="#i-ipw"/></svg></button>
    <button aria-label="显示 3D IPW"><svg width="26" height="24"><use href="#i-ipw3"/></svg></button>
    <div class="vert">VERICUT...</div>
    <hr>
    <div class="lefty"></div>
  </div>

  <div class="stage d-flex flex-column flex-grow-1">
    <div class="doctabs d-flex">
      <div class="doctab d-flex align-items-center"><svg class="me-2" width="19" height="20" viewBox="0 0 36 38"><use href="#i-gen" width="36" height="38"/></svg><span class="me-2">5-4-jiangbei.prt</span><svg width="14" height="14" viewBox="0 0 14 14"><path d="M11 10v2.500H1.500v-11h7l2.500 2.500M7 10l5-5" fill="none" stroke="#fff" stroke-width="2"/></svg><button class="ms-2" aria-label="关闭"><svg width="12" height="12" viewBox="0 0 12 12"><path d="M1 1l10 10M11 1L1 11" stroke="#fff" stroke-width="3"/></svg></button></div>
    </div>
    <div class="view flex-grow-1">
      <svg width="100%" height="100%" viewBox="574 279 1154 765" preserveAspectRatio="xMidYMid slice">
        <defs>
          <linearGradient id="cyl" gradientUnits="userSpaceOnUse" x1="1010" y1="740" x2="1300" y2="690"><stop offset="0" stop-color="#84733a"/><stop offset=".1" stop-color="#a29049"/><stop offset=".35" stop-color="#bfaa57"/><stop offset=".6" stop-color="#c9b45e"/><stop offset="1" stop-color="#bba755"/></linearGradient>
          <linearGradient id="cap" x1="0" x2="1"><stop offset="0" stop-color="#95864a"/><stop offset=".35" stop-color="#938345"/><stop offset=".6" stop-color="#9a8948"/><stop offset="1" stop-color="#9e8e4d"/></linearGradient>
          <linearGradient id="side" x1="0" x2="1" y2="1"><stop offset="0" stop-color="#b5a152"/><stop offset="1" stop-color="#a08f4b"/></linearGradient>
          <pattern id="mesh" width="4" height="3" patternUnits="userSpaceOnUse" patternTransform="rotate(28)"><rect width="2" height="1" fill="#0a6a70"/></pattern>
        </defs>
        <path d="M836 557L1162 352L1319 585L1436 895L1199 1045M836 557L948 853M836 557L992 787L1017 773M992 787L1010 835M1319 585L1296 599M1371 798L1436 895M1002 939L1073 1045M1053 947L1089 1045" fill="none" stroke="#e58b95" stroke-width="1.200"/>
        <path d="M988 279V575" stroke="#a5a5a5" stroke-width="1.500"/>
        <path d="M574 648H1728" stroke="#f4f4f4" stroke-width="1.500"/>
        <path d="M905 588L1178 418L1190 421L1298 585L1296 602L1287 632L1245 658L1018 766L909 608z" fill="url(#side)"/>
        <path d="M905 588L1178 418L1190 421L1186 431L907 600z" fill="#b29e51"/>
        <path d="M905 596L1184 429L1194 490L948 641L908 604z" fill="#c2ad5b"/>
        <path d="M905 597L1184 430" stroke="#ab974b" fill="none"/>
        <path d="M1186 424L1196 490" stroke="#dfc96b" stroke-width="5"/>
        <path d="M907 605L950 645L1019 742V766z" fill="#6c5d27"/>
        <path d="M908 606L950 660L1018 760M925 622L1018 752" stroke="#a8944a" fill="none"/>
        <path d="M948 643L1194 492L1285 631L1250 655L1019 745z" fill="#85723f"/>
        <path d="M946 641L1194 489" stroke="#d3bd65" stroke-width="4"/>
        <path d="M950 647L1195 493L1286 631M950 650L1018 744" stroke="#258c93" fill="none"/>
        <path d="M973 648L1190 509L1275 634L1246 653L1100 660L1019 726z" fill="#0ff"/>
        <path d="M1189 513L1204 545L1201 578L1178 572L1148 588L1166 557z" fill="url(#mesh)"/>
        <path d="M1162 352L1265 622" stroke="#ea9560"/>
        <path d="M988 535V620" stroke="#8a4e78" stroke-width="1.500"/>
        <path d="M988 690V1044" stroke="#dcdcdc" stroke-width="1.500"/>
        <path d="M1023 648Q1024 625 1050 612Q1090 598 1135 598Q1180 602 1202 615Q1209 620 1211 630L1242 666L1284 703Q1312 722 1330 745L1240 840L1005 893L1009 835L1018 745z" fill="url(#cyl)"/>
        <path d="M1024 650Q1022 630 1050 612Q1090 598 1135 598Q1190 602 1211 628Q1180 606 1130 607Q1060 610 1029 634z" fill="#d5be66"/>
        <path d="M1005 893Q1010 850 1024 815Q1065 725 1150 707Q1212 690 1269 707Q1304 718 1330 745Q1353 772 1353 800Q1353 850 1306 890Q1270 916 1190 937Q1120 952 1066 951Q1030 947 1014 926Q1004 910 1005 893z" fill="url(#cap)" stroke="#a8965280"/>
        <path d="M1032 648H1237" stroke="#4b2670" stroke-width="1.500"/>
        <g stroke="#1c1fa8" stroke-width="1.700" fill="none" stroke-dasharray="11 10"><path d="M574 709L945 653L1015 646"/><path d="M584 740L950 661L978 656"/></g>
        <circle cx="950" cy="655" r="22" fill="#a33" fill-opacity=".1" stroke="#c3372f" stroke-opacity=".5" stroke-width="5"/>
        <path d="M949 653H1015" stroke="#d41d1d" stroke-width="5"/>
        <path d="M980 577L996 610L990 623L984 612z" fill="#1978a8"/><path d="M1021 600L996 609L988 621L1000 620z" fill="#1f86b4"/><path d="M995 620L1003 646" stroke="#c9eef2"/>
        <path d="M1195 880L1177 853" stroke="#1d7d22" stroke-width="3"/>
        <path d="M1195 880V886" stroke="#2233cc" stroke-width="3"/>
        <path d="M1195 880L1300 814" stroke="#a32a1b" stroke-width="2.500"/>
        <path d="M1310 807L1284 817L1290 825zM1253 843L1222 858L1225 865z" fill="#d53a30"/>
        <g font-family="Liberation Sans, Arial, sans-serif" font-size="15" fill="#d93a30"><text x="1234" y="833">XC</text><text x="1287" y="800">XM</text></g>
        <g transform="translate(1239 643)"><path d="M0 0h7l25 27q0 5-5 5L1 9z" fill="#fff" stroke="#111" stroke-width="1.500"/><path d="M0 0h8l-7 9z" fill="#111"/><path d="M7 8l19 20M24 31l7-6" stroke="#111" stroke-width="1.500"/></g>
        <path d="M647 940L665 970L643 984L625 956z" fill="#b9b6b6"/><circle cx="639" cy="974" r="5" fill="#e6e6e6"/>
        <path d="M625 956L615 942" stroke="#2c8137" stroke-width="3"/><path d="M662 960L674 952" stroke="#c23a33" stroke-width="3"/><path d="M644 984V989" stroke="#2456d8" stroke-width="5"/>
        <g font-family="Liberation Sans, Arial, sans-serif" font-size="13" font-weight="700"><text x="609" y="938" fill="#2c8137">Y</text><text x="678" y="952" fill="#b8343a">X</text><text x="641" y="998" fill="#2456d8">Z</text></g>
      </svg>
    </div>
  </div>
</main>
<footer class="status flex-shrink-0"></footer>
<script src="https://cdn.jsdelivr.net/npm/bootstrap@5.3.0/dist/js/bootstrap.bundle.min.js"></script>
</body>
</html>
